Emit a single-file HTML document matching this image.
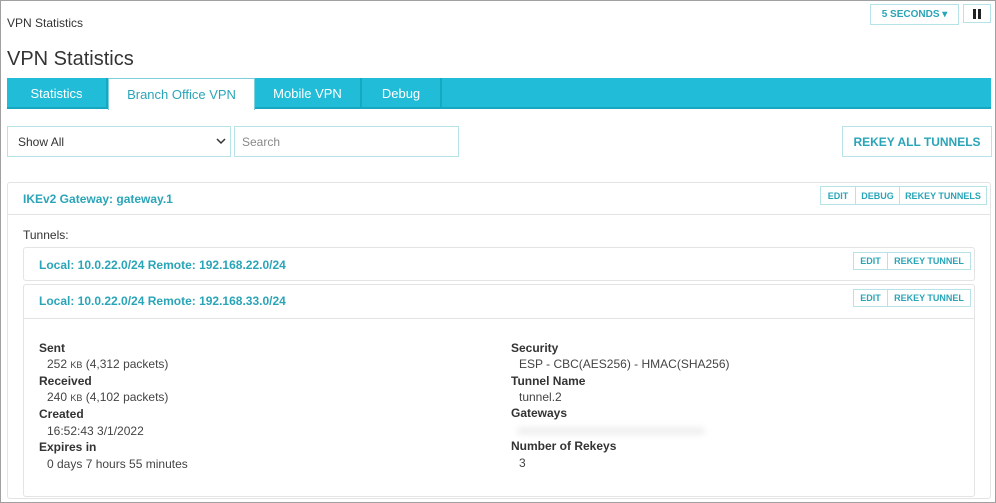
<!DOCTYPE html><html><head><style>
*{margin:0;padding:0;box-sizing:border-box}
body{width:996px;height:503px;position:relative;background:#fff;font-family:"Liberation Sans",sans-serif;color:#333;overflow:hidden}
.a{position:absolute}
.frame{left:0;top:0;width:996px;height:503px;border:1px solid #a0a0a0}
.btn{position:absolute;border:1px solid #b7e2e8;color:#2aa5b8;font-weight:bold;font-size:9px;display:flex;align-items:center;justify-content:center;background:#fff}
.tab{position:absolute;top:78px;height:31px;color:#fff;font-size:13px;display:flex;align-items:center;justify-content:center;border-right:2px solid #14a9c0}
.lbl{position:absolute;font-size:12px;font-weight:bold;color:#333}
.val{position:absolute;font-size:12px;color:#444}
.link{position:absolute;color:#2aa5b8;font-weight:bold;font-size:12px}
</style></head><body>
<div class="a frame"></div>
<div class="a" style="left:7px;top:16px;font-size:12px">VPN Statistics</div>
<div class="btn" style="left:870px;top:4px;width:89px;height:21px;font-size:10px">5 SECONDS ▾</div>
<div class="btn" style="left:963px;top:4px;width:28px;height:19px"><div style="width:3px;height:10px;background:#222;margin-right:2px"></div><div style="width:3px;height:10px;background:#222"></div></div>
<div class="a" style="left:7px;top:48px;font-size:20px;color:#333">VPN Statistics</div>
<div class="a" style="left:7px;top:78px;width:984px;height:31px;background:#21bcd7;border-bottom:2px solid #17a7c0"></div>
<div class="tab" style="left:7px;width:101px">Statistics</div>
<div class="tab" style="left:108px;width:147px;background:#fff;color:#2aa5b8;border:1px solid #7ecfdc;border-bottom:none;height:32px">Branch Office VPN</div>
<div class="tab" style="left:255px;width:107px">Mobile VPN</div>
<div class="tab" style="left:362px;width:80px">Debug</div>
<div class="a" style="left:7px;top:126px;width:224px;height:31px;border:1px solid #b7e2e8;font-size:12px;padding:8px 10px;color:#333">Show All<svg style="position:absolute;right:4px;top:11px" width="10" height="7" viewBox="0 0 10 7"><path d="M1 1 L5 5 L9 1" stroke="#333" stroke-width="1.5" fill="none"/></svg></div>
<div class="a" style="left:234px;top:126px;width:225px;height:31px;border:1px solid #b7e2e8;font-size:12px;padding:8px 7px;color:#888">Search</div>
<div class="btn" style="left:842px;top:126px;width:150px;height:31px;font-size:12px">REKEY ALL TUNNELS</div>
<div class="a" style="left:7px;top:182px;width:984px;height:317px;border:1px solid #e4e4e4;border-radius:3px"></div>
<div class="a" style="left:7px;top:214px;width:984px;height:1px;background:#e4e4e4"></div>
<div class="link" style="left:23px;top:192px">IKEv2 Gateway: gateway.1</div>
<div class="btn" style="left:820px;top:186px;width:36px;height:19px">EDIT</div>
<div class="btn" style="left:855px;top:186px;width:45px;height:19px">DEBUG</div>
<div class="btn" style="left:899px;top:186px;width:88px;height:19px">REKEY TUNNELS</div>
<div class="a" style="left:23px;top:228px;font-size:12px">Tunnels:</div>
<div class="a" style="left:23px;top:247px;width:952px;height:34px;border:1px solid #e4e4e4;border-radius:3px"></div>
<div class="link" style="left:39px;top:258px">Local: 10.0.22.0/24 Remote: 192.168.22.0/24</div>
<div class="btn" style="left:853px;top:252px;width:35px;height:18px">EDIT</div>
<div class="btn" style="left:887px;top:252px;width:84px;height:18px">REKEY TUNNEL</div>
<div class="a" style="left:23px;top:284px;width:952px;height:213px;border:1px solid #e4e4e4;border-radius:3px"></div>
<div class="a" style="left:23px;top:318px;width:952px;height:1px;background:#e4e4e4"></div>
<div class="link" style="left:39px;top:294px">Local: 10.0.22.0/24 Remote: 192.168.33.0/24</div>
<div class="btn" style="left:853px;top:289px;width:35px;height:18px">EDIT</div>
<div class="btn" style="left:887px;top:289px;width:84px;height:18px">REKEY TUNNEL</div>
<div class="lbl" style="left:39px;top:341px">Sent</div>
<div class="val" style="left:47px;top:357px">252 <span style="font-size:9px">KB</span> (4,312 packets)</div>
<div class="lbl" style="left:39px;top:374px">Received</div>
<div class="val" style="left:47px;top:390px">240 <span style="font-size:9px">KB</span> (4,102 packets)</div>
<div class="lbl" style="left:39px;top:407px">Created</div>
<div class="val" style="left:47px;top:424px">16:52:43 3/1/2022</div>
<div class="lbl" style="left:39px;top:440px">Expires in</div>
<div class="val" style="left:47px;top:457px">0 days 7 hours 55 minutes</div>
<div class="lbl" style="left:511px;top:341px">Security</div>
<div class="val" style="left:519px;top:357px">ESP - CBC(AES256) - HMAC(SHA256)</div>
<div class="lbl" style="left:511px;top:374px">Tunnel Name</div>
<div class="val" style="left:519px;top:390px">tunnel.2</div>
<div class="lbl" style="left:511px;top:406px">Gateways</div>
<div class="a" style="left:517px;top:427px;width:188px;height:8px;background:#f0f0f0;border-radius:4px;filter:blur(3px)"></div>
<div class="lbl" style="left:511px;top:439px">Number of Rekeys</div>
<div class="val" style="left:519px;top:456px">3</div>
</body></html>
